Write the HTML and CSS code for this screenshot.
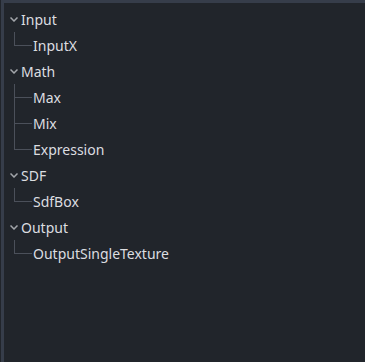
FILE: index.html
```html
<!DOCTYPE html>
<html>
<head>
<meta charset="utf-8">
<link rel="stylesheet" href="styles.css">
</head>
<body>
<div class="panel">
  <div class="tree">
    <div class="row parent"><svg class="chev" width="8" height="5" viewBox="0 0 8 5"><path d="M0.5 0.5 L4 4 L7.5 0.5" fill="none" stroke="currentColor" stroke-width="1.5"/></svg><span>Input</span></div>
    <div class="row child last"><span>InputX</span></div>
    <div class="row parent"><svg class="chev" width="8" height="5" viewBox="0 0 8 5"><path d="M0.5 0.5 L4 4 L7.5 0.5" fill="none" stroke="currentColor" stroke-width="1.5"/></svg><span>Math</span></div>
    <div class="row child"><span>Max</span></div>
    <div class="row child"><span>Mix</span></div>
    <div class="row child last"><span>Expression</span></div>
    <div class="row parent"><svg class="chev" width="8" height="5" viewBox="0 0 8 5"><path d="M0.5 0.5 L4 4 L7.5 0.5" fill="none" stroke="currentColor" stroke-width="1.5"/></svg><span>SDF</span></div>
    <div class="row child last"><span>SdfBox</span></div>
    <div class="row parent"><svg class="chev" width="8" height="5" viewBox="0 0 8 5"><path d="M0.5 0.5 L4 4 L7.5 0.5" fill="none" stroke="currentColor" stroke-width="1.5"/></svg><span>Output</span></div>
    <div class="row child last"><span>OutputSingleTexture</span></div>
  </div>
</div>
</body>
</html>
```
FILE: styles.css
```css
html, body {
  margin: 0;
  padding: 0;
  background: #21252b;
}
body {
  width: 365px;
  height: 362px;
  overflow: hidden;
  font-family: "Noto Sans", "DejaVu Sans", sans-serif;
  font-size: 14px;
  color: #dcdde0;
}
.panel {
  box-sizing: border-box;
  height: 362px;
  margin-left: 1px;
  border-top: 3px solid #363d4a;
  border-left: 3px solid #363d4a;
  background: #21252b;
  padding-top: 3px;
}
.tree {
  display: flex;
  flex-direction: column;
}
.row {
  position: relative;
  height: 26px;
  display: flex;
  align-items: center;
  white-space: nowrap;
}
.parent {
  padding-left: 6px;
}
.chev {
  color: #a3a6ab;
  margin-right: 3px;
  margin-top: 1px;
}
.child {
  padding-left: 29px;
}
.child::before {
  content: "";
  position: absolute;
  left: 10px;
  top: 0;
  width: 1px;
  height: 26px;
  background: #4b505a;
}
.child.last::before {
  height: 14px;
}
.child::after {
  content: "";
  position: absolute;
  left: 11px;
  top: 13px;
  width: 17px;
  height: 1px;
  background: #4b505a;
}
```
